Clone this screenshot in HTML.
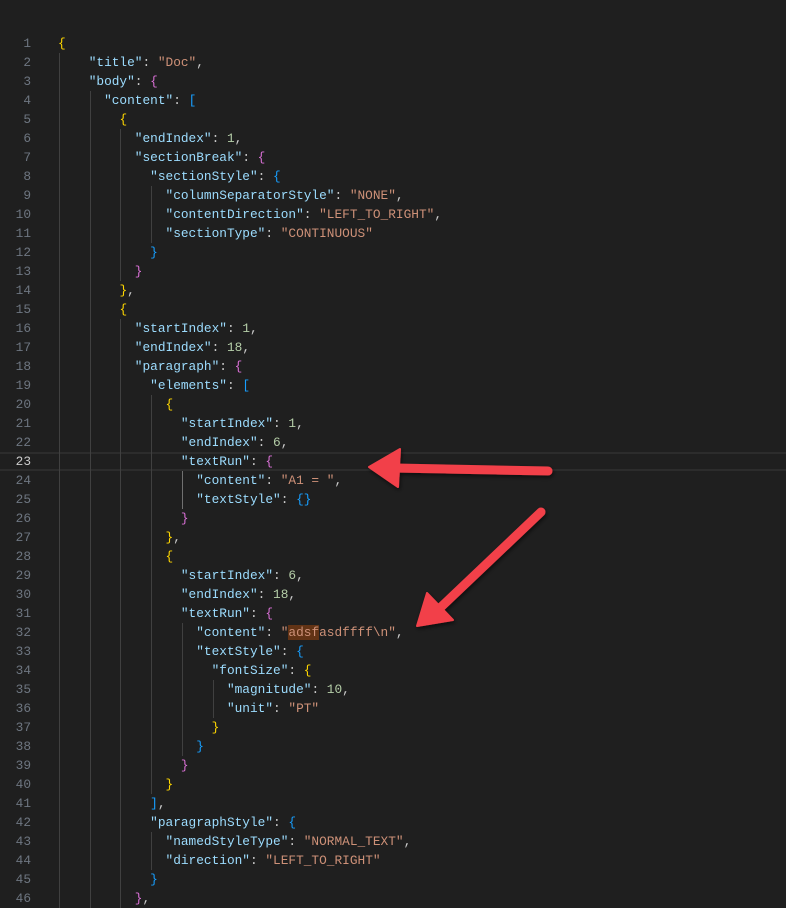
<!DOCTYPE html>
<html><head><style>
html,body{margin:0;padding:0;background:#1f1f1f;width:786px;height:895px;overflow:hidden}
.ln{position:absolute;left:0;width:31px;text-align:right;font:12.8px/19px "Liberation Mono",monospace;color:#6e7681;top:34px;white-space:pre}
.code{position:absolute;left:58px;top:34px;font:12.8px/19px "Liberation Mono",monospace;color:#cccccc;white-space:pre}
.k{color:#9cdcfe}.s{color:#ce9178}.n{color:#b5cea8}
.y{color:#ffd700}.p{color:#da70d6}.b{color:#179fff}
.g{position:absolute;width:1px;background:#404040}
.cur{position:absolute;left:0;right:0;top:452px;height:15px;border-top:2px solid #2c2c2c;border-bottom:2px solid #2c2c2c}
.hl{background:#623315}
</style></head><body>
<div class="cur"></div>
<div class="ln">1
2
3
4
5
6
7
8
9
10
11
12
13
14
15
16
17
18
19
20
21
22
<span style="color:#cccccc">23</span>
24
25
26
27
28
29
30
31
32
33
34
35
36
37
38
39
40
41
42
43
44
45
46</div>
<div id="guides"></div>
<div class="code"><span class="y">{</span>
    <span class="k">"title"</span>: <span class="s">"Doc"</span>,
    <span class="k">"body"</span>: <span class="p">{</span>
      <span class="k">"content"</span>: <span class="b">[</span>
        <span class="y">{</span>
          <span class="k">"endIndex"</span>: <span class="n">1</span>,
          <span class="k">"sectionBreak"</span>: <span class="p">{</span>
            <span class="k">"sectionStyle"</span>: <span class="b">{</span>
              <span class="k">"columnSeparatorStyle"</span>: <span class="s">"NONE"</span>,
              <span class="k">"contentDirection"</span>: <span class="s">"LEFT_TO_RIGHT"</span>,
              <span class="k">"sectionType"</span>: <span class="s">"CONTINUOUS"</span>
            <span class="b">}</span>
          <span class="p">}</span>
        <span class="y">}</span>,
        <span class="y">{</span>
          <span class="k">"startIndex"</span>: <span class="n">1</span>,
          <span class="k">"endIndex"</span>: <span class="n">18</span>,
          <span class="k">"paragraph"</span>: <span class="p">{</span>
            <span class="k">"elements"</span>: <span class="b">[</span>
              <span class="y">{</span>
                <span class="k">"startIndex"</span>: <span class="n">1</span>,
                <span class="k">"endIndex"</span>: <span class="n">6</span>,
                <span class="k">"textRun"</span>: <span class="p">{</span>
                  <span class="k">"content"</span>: <span class="s">"A1 = "</span>,
                  <span class="k">"textStyle"</span>: <span class="b">{}</span>
                <span class="p">}</span>
              <span class="y">}</span>,
              <span class="y">{</span>
                <span class="k">"startIndex"</span>: <span class="n">6</span>,
                <span class="k">"endIndex"</span>: <span class="n">18</span>,
                <span class="k">"textRun"</span>: <span class="p">{</span>
                  <span class="k">"content"</span>: <span class="s">"<span class="hl">adsf</span>asdffff\n"</span>,
                  <span class="k">"textStyle"</span>: <span class="b">{</span>
                    <span class="k">"fontSize"</span>: <span class="y">{</span>
                      <span class="k">"magnitude"</span>: <span class="n">10</span>,
                      <span class="k">"unit"</span>: <span class="s">"PT"</span>
                    <span class="y">}</span>
                  <span class="b">}</span>
                <span class="p">}</span>
              <span class="y">}</span>
            <span class="b">]</span>,
            <span class="k">"paragraphStyle"</span>: <span class="b">{</span>
              <span class="k">"namedStyleType"</span>: <span class="s">"NORMAL_TEXT"</span>,
              <span class="k">"direction"</span>: <span class="s">"LEFT_TO_RIGHT"</span>
            <span class="b">}</span>
          <span class="p">}</span>,</div>
<svg width="786" height="895" style="position:absolute;left:0;top:0">
<defs><filter id="sh" x="-20%" y="-20%" width="140%" height="140%"><feDropShadow dx="1" dy="2" stdDeviation="2" flood-color="#000" flood-opacity="0.6"/></filter></defs>
<g filter="url(#sh)" fill="#f2404a" stroke="#f2404a" stroke-linecap="round">
<line x1="548" y1="471" x2="395" y2="468" stroke-width="9"/>
<polygon points="369,467 400,449 398,487" stroke-width="2" stroke-linejoin="round"/>
<line x1="541" y1="512" x2="440" y2="608" stroke-width="9"/>
<polygon points="417,626 427,593 453,620" stroke-width="2" stroke-linejoin="round"/>
</g>
</svg>
<script>
var G=[[0,2,46],[4,4,46],[8,6,13],[8,16,46],[12,9,11],[12,20,40],[12,43,44],[16,24,25,1],[16,32,38],[20,35,36]];
var h='';G.forEach(function(g){var x=58+g[0]*7.68+1,t=34+(g[1]-1)*19,hh=(g[2]-g[1]+1)*19;
h+='<div class="g" style="left:'+x+'px;top:'+t+'px;height:'+hh+'px;'+(g[3]?'background:#707070':'')+'"></div>';});
document.getElementById('guides').innerHTML=h;
</script>
</body></html>
